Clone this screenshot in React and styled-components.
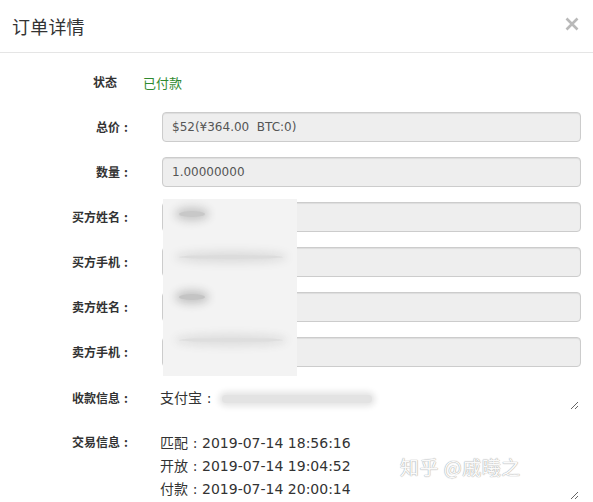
import styled, { createGlobalStyle } from "styled-components";

const Global = createGlobalStyle`
  html, body {
    margin: 0;
    background: #fff;
    overflow: hidden;
  }
  body {
    font-family: "DejaVu Sans", "Noto Sans CJK SC", sans-serif;
    color: #333;
  }
`

const Modal = styled.div`
  position: relative;
  width: 593px;
  height: 502px;
  background: #fff;
`

const Header = styled.div`
  height: 52px;
  display: flex;
  align-items: center;
  justify-content: space-between;
  padding: 0 14px 0 12px;
  border-bottom: 1px solid #e5e5e5;
`

const Title = styled.h4`
  margin: 0;
  font-family: "Noto Sans CJK SC", sans-serif;
  font-size: 18px;
  font-weight: 400;
  color: #333;
  letter-spacing: 0.2px;
`

const Close = styled.button`
  border: none;
  background: none;
  padding: 0;
  margin-top: -4px;
  cursor: pointer;
  display: flex;
`

const Body = styled.div`
  padding-top: 14px;
`

const Row = styled.div`
  display: flex;
  align-items: ${p => (p.$top ? "flex-start" : "center")};
  gap: ${p => (p.$narrow ? "26px" : "30px")};
  min-height: 30px;
  margin-bottom: ${p => p.$mb || "15px"};
`

const Label = styled.label`
  width: ${p => (p.$narrow ? "117px" : "132px")};
  flex-shrink: 0;
  text-align: right;
  font-family: "Noto Sans CJK SC", sans-serif;
  font-size: 12px;
  font-weight: 700;
  line-height: ${p => (p.$top ? "22px" : "30px")};
  color: #333;
`

const Colon = styled.span`
  display: inline-block;
  width: ${p => p.$w || 12}px;
  text-align: center;
`

const Status = styled.span`
  font-family: "Noto Sans CJK SC", sans-serif;
  font-size: 13px;
  color: #2f8a2f;
`

const Input = styled.div`
  width: 419px;
  height: 30px;
  box-sizing: border-box;
  background: #eee;
  border: 1px solid #ccc;
  border-radius: 4px;
  box-shadow: inset 0 1px 1px rgba(0, 0, 0, 0.075);
  padding: 0 9px;
  display: flex;
  align-items: center;
  font-size: 12px;
  color: #555;
  white-space: pre;
`

const TextBox = styled.div`
  position: relative;
  width: 421px;
  margin-left: -2px;
  font-size: 14px;
  line-height: ${p => p.$lh || "30px"};
  color: #333;
  min-height: 30px;
  padding-bottom: ${p => p.$pb || "0"};
`

const Cjk = styled.span`
  font-family: "Noto Sans CJK SC", sans-serif;
`

const Blur = styled.span`
  display: inline-block;
  vertical-align: middle;
  width: ${p => p.$w}px;
  height: ${p => p.$h}px;
  margin-left: ${p => p.$ml || 0}px;
  border-radius: ${p => (p.$pill ? "8px" : "50%")};
  background: ${p => p.$c};
  box-shadow: 0 0 ${p => p.$b || 8}px ${p => p.$s || 4}px ${p => p.$c};
  opacity: 0.9;
`

const Grip = styled.svg`
  position: absolute;
  right: 2px;
  bottom: ${p => p.$b || "4px"};
`

const Redact = styled.div`
  position: absolute;
  left: 163px;
  top: 199px;
  width: 134px;
  height: 177px;
  background: #f3f3f3;
  display: flex;
  flex-direction: column;
  padding: 12px 0 0 16px;
  box-sizing: border-box;
  overflow: hidden;
`

const BlobSlot = styled.div`
  height: 45px;
  display: flex;
  align-items: flex-start;
  padding-top: ${p => p.$pt || 0}px;
  box-sizing: border-box;
`

const Lines = styled.div`
  display: flex;
  flex-direction: column;
`

const Watermark = styled.div`
  position: absolute;
  left: 400px;
  top: 453px;
  font-family: "Noto Sans CJK SC", sans-serif;
  font-size: 19px;
  color: #fafafa;
  text-shadow: 0 0 1px #a8a8a8, 0 0 1px #a8a8a8;
  letter-spacing: 0.5px;
`

const GripIcon = ({ b }) => (
  <Grip $b={b} width="9" height="9" viewBox="0 0 9 9">
    <path d="M1 8 L8 1 M5 8 L8 5" stroke="#666" strokeWidth="1" />
  </Grip>
)

const fields = [
  ["总价", "$52(¥364.00  BTC:0)"],
  ["数量", "1.00000000"],
  ["买方姓名", ""],
  ["买方手机", ""],
  ["卖方姓名", ""],
  ["卖方手机", ""],
]

const trades = [
  ["匹配", "2019-07-14 18:56:16"],
  ["开放", "2019-07-14 19:04:52"],
  ["付款", "2019-07-14 20:00:14"],
]

export default function App() {
  return (
    <Modal>
      <Global />
      <Header>
        <Title>订单详情</Title>
        <Close aria-label="close">
          <svg width="14" height="14" viewBox="0 0 14 14">
            <path d="M1.5 1.5 L12.5 12.5 M12.5 1.5 L1.5 12.5" stroke="#b9b9b9" strokeWidth="2.6" />
          </svg>
        </Close>
      </Header>
      <Body>
        <Row $narrow>
          <Label $narrow>状态</Label>
          <Status>已付款</Status>
        </Row>
        {fields.map(([label, value]) => (
          <Row key={label}>
            <Label>{label}<Colon>:</Colon></Label>
            <Input>{value}</Input>
          </Row>
        ))}
        <Row $mb="18px">
          <Label>收款信息<Colon>:</Colon></Label>
          <TextBox>
            <Cjk>支付宝</Cjk><Colon $w={14}>:</Colon>
            <Blur $w={150} $h={8} $c="#e0e0e0" $b={6} $s={3} $pill $ml={6} />
            <GripIcon b="3px" />
          </TextBox>
        </Row>
        <Row $top $mb="0">
          <Label $top>交易信息<Colon>:</Colon></Label>
          <TextBox $lh="22px" $pb="2px">
            <Lines>
              {trades.map(([k, v]) => (
                <div key={k}>
                  <Cjk>{k}</Cjk><Colon $w={14}>:</Colon>{v}
                </div>
              ))}
            </Lines>
            <GripIcon b="2px" />
          </TextBox>
        </Row>
      </Body>
      <Redact>
        <BlobSlot><Blur $w={26} $h={6} $c="#c4c4c4" /></BlobSlot>
        <BlobSlot $pt={3}><Blur $w={104} $h={4} $c="#dadada" /></BlobSlot>
        <BlobSlot><Blur $w={26} $h={6} $c="#c0c0c0" /></BlobSlot>
        <BlobSlot $pt={3}><Blur $w={104} $h={4} $c="#dcdcdc" /></BlobSlot>
      </Redact>
      <Watermark>知乎 @戚曦之</Watermark>
    </Modal>
  );
}
